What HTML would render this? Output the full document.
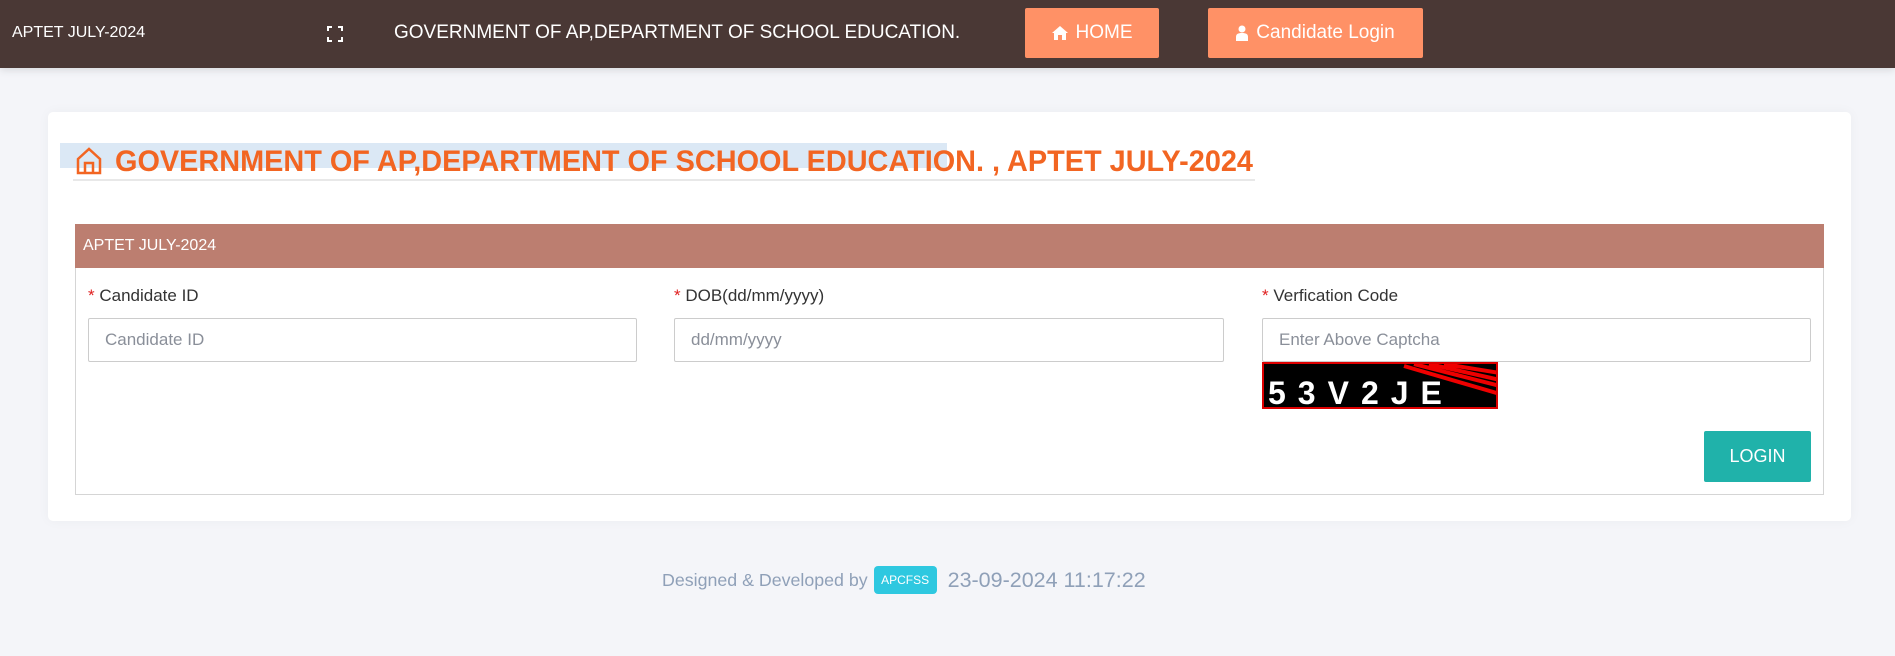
<!DOCTYPE html>
<html><head><meta charset="utf-8"><style>
*{box-sizing:border-box;margin:0;padding:0}
body{width:1895px;height:656px;background:#f4f5f9;font-family:"Liberation Sans",sans-serif;position:relative;overflow:hidden}
.nav{position:absolute;left:0;top:0;width:1895px;height:68px;background:#4a3835;box-shadow:0 2px 8px rgba(0,0,0,.12)}
.nav .t{position:absolute;color:#fff;font-size:16px;top:24px;white-space:nowrap}
.btn{position:absolute;top:8px;height:50px;background:#ff9166;border-radius:2px;color:#fff;font-size:19px;display:flex;align-items:center;justify-content:center;gap:8px}
.card{position:absolute;left:48px;top:112px;width:1803px;height:409px;background:#fff;border-radius:5px;box-shadow:0 0 12px rgba(0,0,0,.04)}
.hl{position:absolute;left:60px;top:143px;width:887px;height:25px;background:#dbe8f5}
.hline{position:absolute;left:73px;top:179px;width:1182px;height:2px;background:#e8e8e8}
.h{position:absolute;left:115px;top:144px;color:#f26522;font-weight:bold;font-size:30px;white-space:nowrap;transform:scaleX(.962);transform-origin:left top;line-height:36px}
.panel{position:absolute;left:75px;top:224px;width:1749px;height:271px;border:1px solid #d5d5d5}
.ph{position:absolute;left:75px;top:224px;width:1749px;height:44px;background:#bc7e70;color:#fff;font-size:16px;padding:13px 8px}
.lab{position:absolute;top:286px;font-size:17px;color:#333}
.lab b{color:#e02020;font-weight:normal}
.inp{position:absolute;top:318px;height:44px;border:1px solid #ccc;border-radius:2px;color:#8a8f99;font-size:17px;padding:11px 16px}
.cap{position:absolute;left:1262px;top:362px;width:236px;height:47px;background:#000;border:2px solid #d00;overflow:hidden}
.login{position:absolute;left:1704px;top:431px;width:107px;height:51px;background:#20b2aa;color:#fff;font-size:18px;border-radius:2px;text-align:center;line-height:51px}
.foot{position:absolute;top:566px;left:662px;color:#8fa0b8;font-size:17.8px;white-space:nowrap;display:flex;align-items:center}
.badge{background:#2ec8e0;color:#fff;font-size:12px;border-radius:4px;width:63px;height:28px;display:inline-flex;align-items:center;justify-content:center;margin:0 11px 0 6px}
</style></head><body>
<div class="nav">
<div class="t" style="left:12px">APTET JULY-2024</div>
<svg style="position:absolute;left:327px;top:26px" width="16" height="16" viewBox="0 0 16 16" fill="none" stroke="#fff" stroke-width="2"><path d="M1 5V1h4M11 1h4v4M15 11v4h-4M5 15H1v-4"/></svg>
<div class="t" style="left:394px;font-size:19px;top:22px">GOVERNMENT OF AP,DEPARTMENT OF SCHOOL EDUCATION.</div>
<div class="btn" style="left:1025px;width:134px"><svg width="16" height="14" viewBox="0 0 16 14" fill="#fff"><path d="M8 0L0 7h2v7h4V9h4v5h4V7h2z"/></svg>HOME</div>
<div class="btn" style="left:1208px;width:215px"><svg width="12" height="16" viewBox="0 0 12 16" fill="#fff"><circle cx="6" cy="4" r="3.5"/><path d="M0 16v-4c0-3 2-4 6-4s6 1 6 4v4z"/></svg>Candidate Login</div>
</div>
<div class="card"></div>
<div class="hl"></div>
<div class="hline"></div>
<svg style="position:absolute;left:76px;top:147px" width="26" height="28" viewBox="0 0 26 28" fill="none" stroke="#f26522" stroke-width="2.5"><path d="M2 12L13 2l11 10v14H2z"/><path d="M9 26V16h8v10"/></svg>
<div class="h">GOVERNMENT OF AP,DEPARTMENT OF SCHOOL EDUCATION. , APTET JULY-2024</div>
<div class="panel"></div>
<div class="ph">APTET JULY-2024</div>
<div class="lab" style="left:88px"><b>*</b> Candidate ID</div>
<div class="lab" style="left:674px"><b>*</b> DOB(dd/mm/yyyy)</div>
<div class="lab" style="left:1262px"><b>*</b> Verfication Code</div>
<div class="inp" style="left:88px;width:549px">Candidate ID</div>
<div class="inp" style="left:674px;width:550px">dd/mm/yyyy</div>
<div class="inp" style="left:1262px;width:549px">Enter Above Captcha</div>
<div class="cap"><svg width="236" height="47" viewBox="0 0 236 47"><path d="M150 0L236 22M165 0L236 16M180 0L236 9M140 2L236 30" stroke="#e00" stroke-width="4"/><text x="4" y="40" fill="#fff" font-family="Liberation Sans" font-size="32" font-weight="bold" letter-spacing="12">53V2JE</text></svg></div>
<div class="login">LOGIN</div>
<div class="foot">Designed &amp; Developed by <span class="badge">APCFSS</span><span style="font-size:21.5px">23-09-2024 11:17:22</span></div>
</body></html>
